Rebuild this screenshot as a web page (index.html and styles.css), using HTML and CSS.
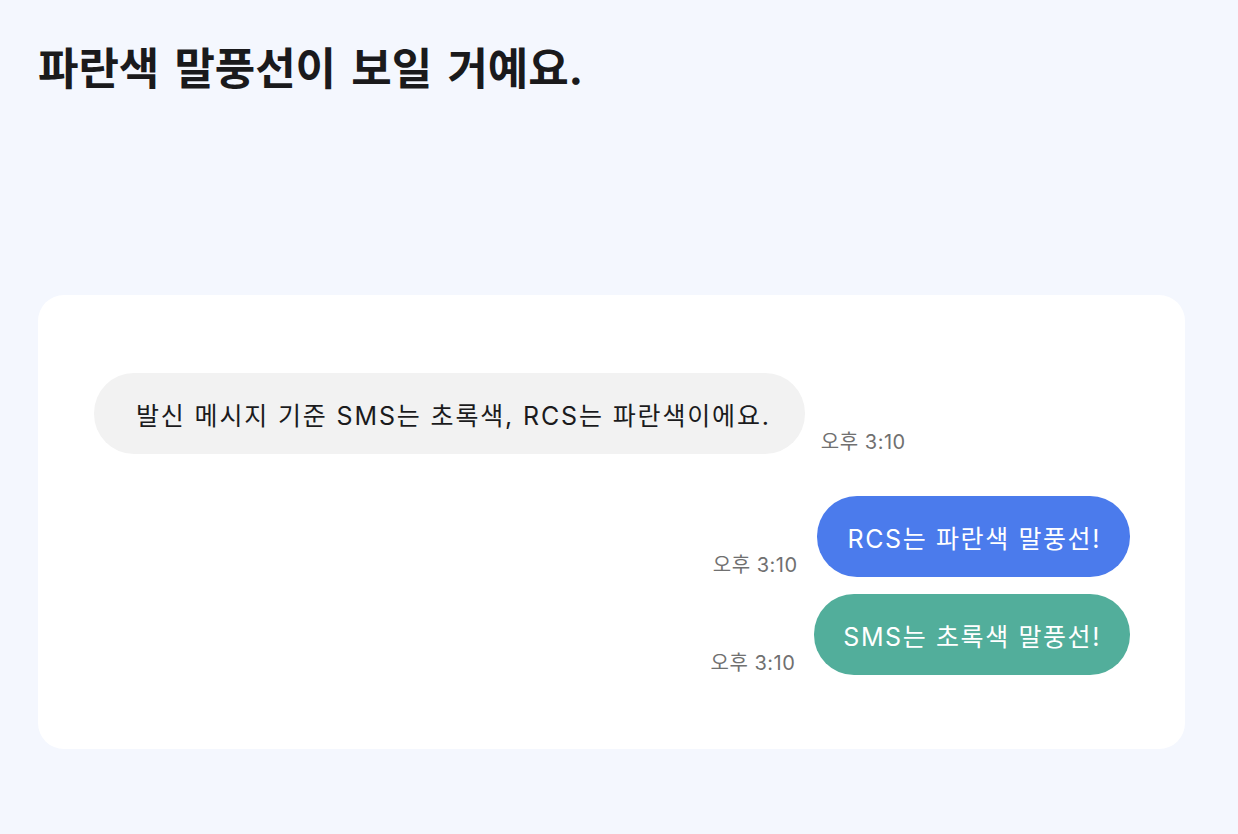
FILE: index.html
```html
<!DOCTYPE html>
<html lang="ko">
<head>
<meta charset="utf-8">
<link rel="stylesheet" href="styles.css">
</head>
<body>
<main class="page">
  <h1 class="title">파란색 말풍선이 보일 거예요.</h1>
  <section class="card">
    <div class="row row-in">
      <div class="bubble bubble-in">발신 메시지 기준 SMS는 초록색, RCS는 파란색이에요.</div>
      <span class="time">오후 3:10</span>
    </div>
    <div class="row row-out row-first">
      <span class="time">오후 3:10</span>
      <div class="bubble bubble-rcs">RCS는 파란색 말풍선!</div>
    </div>
    <div class="row row-out">
      <span class="time">오후 3:10</span>
      <div class="bubble bubble-sms">SMS는 초록색 말풍선!</div>
    </div>
  </section>
</main>
</body>
</html>
```

FILE: styles.css
```css
* { box-sizing: border-box; }
html, body {
  margin: 0;
  padding: 0;
  background: #f4f7fe;
}
body {
  font-family: Inter, "Noto Sans CJK KR", sans-serif;
  color: #1b1b1d;
}
.page {
  padding: 39px 53px 0 38px;
}
.title {
  margin: 0;
  font-size: 44px;
  line-height: 60px;
  font-weight: 700;
  letter-spacing: -0.1px;
  word-spacing: 5px;
  color: #1a1a1c;
}
.card {
  margin-top: 196px;
  background: #ffffff;
  border-radius: 26px;
  padding: 78px 55px 74px 56px;
  display: flex;
  flex-direction: column;
}
.row {
  display: flex;
  align-items: flex-end;
}
.row-out {
  justify-content: flex-end;
  margin-top: 17px;
}
.row-first {
  margin-top: 42px;
}
.bubble {
  height: 81px;
  border-radius: 40px;
  display: flex;
  align-items: center;
  font-size: 25px;
  letter-spacing: 1.6px;
  white-space: nowrap;
}
.bubble-in {
  background: #f2f2f2;
  color: #1b1b1d;
  letter-spacing: 1.85px;
  padding: 0 34px 0 42px;
}
.bubble-rcs {
  background: #4b7bec;
  color: #ffffff;
  padding: 0 29px 0 31px;
}
.bubble-sms {
  background: #52ae9b;
  color: #ffffff;
  padding: 0 29px 0 29px;
}
.time {
  font-size: 20px;
  letter-spacing: 0.5px;
  color: #707070;
  line-height: 22px;
  margin-bottom: 1px;
  white-space: nowrap;
}
.row-in .time { margin-left: 16px; }
.row-out .time { margin-right: 19px; }
```
